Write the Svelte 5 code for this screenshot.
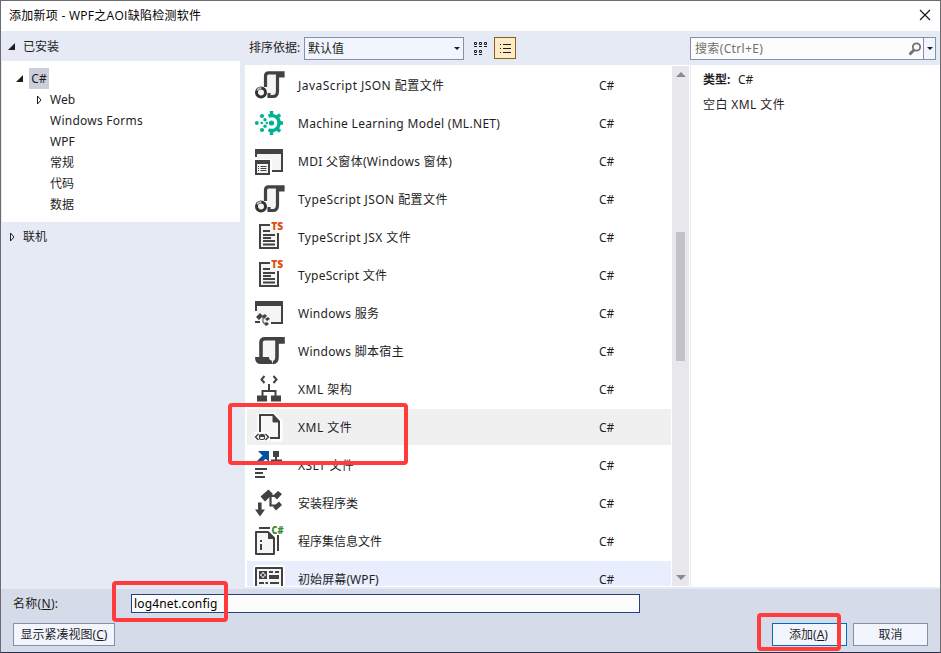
<script>
  const tree = [
    { label: 'Web' },
    { label: 'Windows Forms', track: 0.25 },
    { label: 'WPF' },
    { label: '常规' },
    { label: '代码' },
    { label: '数据' }
  ];
  const items = [
    { icon: 'json', name: 'JavaScript JSON 配置文件', track: 0.45 },
    { icon: 'ml', name: 'Machine Learning Model (ML.NET)', track: 0.3 },
    { icon: 'mdi', name: 'MDI 父窗体(Windows 窗体)', track: 0.3 },
    { icon: 'json', name: 'TypeScript JSON 配置文件', track: 0.42 },
    { icon: 'ts', name: 'TypeScript JSX 文件', track: 0.42 },
    { icon: 'ts', name: 'TypeScript 文件', track: 0.25 },
    { icon: 'service', name: 'Windows 服务', track: 0.3 },
    { icon: 'script', name: 'Windows 脚本宿主', track: 0.3 },
    { icon: 'schema', name: 'XML 架构', track: 0.5 },
    { icon: 'xml', name: 'XML 文件', track: 0.5, state: 'selected' },
    { icon: 'xslt', name: 'XSLT 文件', track: 0.4 },
    { icon: 'installer', name: '安装程序类' },
    { icon: 'info', name: '程序集信息文件' },
    { icon: 'splash', name: '初始屏幕(WPF)', track: 0.1, state: 'hover' }
  ];
</script>

{#snippet icon(kind)}
  <svg class="icon" width="32" height="32" viewBox="0 0 32 32">
    {#if kind === 'json'}
      <path d="M14 5h11v17l-3 6h-6l-2-6z" fill="#f5f5f5" />
      <path d="M12.500 18V7q0-3.200 3.200-3.200H30v3h-5.500V22q0 5.500-4.500 5.500h-4V24" fill="none" stroke="#424242" stroke-width="3.200" />
      <circle cx="8" cy="23.500" r="4.500" fill="#f4f4f4" stroke="#333" stroke-width="3" />
      <path d="M4.300 21.500q1-2.500 4-2.500" fill="none" stroke="#bbb" stroke-width="1.800" />
    {:else if kind === 'ml'}
      <g fill="#00b294">
        <circle cx="18.500" cy="16" r="2.600" />
        <circle cx="3.800" cy="16" r="1.900" /><circle cx="9" cy="9" r="2.100" /><circle cx="9" cy="23" r="2.100" />
        <circle cx="8.800" cy="16" r="1.300" /><circle cx="12" cy="12.800" r="1.700" /><circle cx="12" cy="19.200" r="1.700" />
        <circle cx="13.800" cy="16" r="1.200" />
      </g>
      <path d="M15.500 9.200a7.500 7.500 0 1 1 0 13.600" fill="none" stroke="#00b294" stroke-width="3.400" />
      <path d="M18.500 4v5M18.500 23v5M23.500 11l3.500-3.500M23.500 21l3.500 3.500M25 16h5" stroke="#00b294" stroke-width="3.500" />
    {:else if kind === 'mdi'}
      <path d="M2 4h28v23H19v-2h9V9H4v3H2z" fill="#424242" />
      <path d="M4 9h24v16h-9V14H4z" fill="#f5f5f5" />
      <path d="M3 16h13v13H3z" fill="#f5f5f5" stroke="#424242" stroke-width="2" /><path d="M2 15h15v4H2z" fill="#424242" />
      <path d="M5 21.500h1M7.500 21.500h6M5 23.500h1M7.500 23.500h6M5 25.500h1M7.500 25.500h6" stroke="#424242" />
    {:else if kind === 'ts'}
      <path d="M17 4H7v23h18V12" fill="#f5f5f5" stroke="#424242" stroke-width="2" />
      <path d="M10 10h7M10 14h12M10 17h8M10 20h12M10 23.500h12" stroke="#424242" stroke-width="2" />
      <text x="18.300" y="8.500" class="badge" fill="#e04e0f" textLength="12" lengthAdjust="spacingAndGlyphs">TS</text>
    {:else if kind === 'service'}
      <path d="M4 9h24v16H4z" fill="#f5f5f5" />
      <path d="M2 4h28v23H18v-2h10V9H4v5H2z" fill="#424242" />
      <path d="M3 20l4-4 3 3-4 4zM9 19l3-2 2 2-3 3zM12 22l3-2 2 2-3 2zM11 27l3-2 2 2-3 2zM2 24h5v2H2z" fill="#424242" />
      <path d="M10 20v6h3" fill="none" stroke="#424242" />
    {:else if kind === 'script'}
      <path d="M10 5h13v17l-3 6H10z" fill="#f5f5f5" />
      <path d="M8 22V7.500q0-3.700 4-3.700h18V7h-6v15q0 5.500-4 5.500" fill="none" stroke="#424242" stroke-width="3.600" />
      <path d="M2 22h14q0 3 2.500 3.500L20 29H7q-5 0-5-7z" fill="#424242" />
    {:else if kind === 'schema'}
      <path d="M11.500 3L8.500 6.500l3 3.500M20.500 3l3 3.500-3 3.500M16 11v7M9.500 23v-5h13v5" fill="none" stroke="#424242" stroke-width="2" />
      <path d="M4 22.500h10v6H4zM18 22.500h10v6H18z" fill="#424242" />
    {:else if kind === 'xml'}
      <path d="M7 22V4.500h14l6 6V28H18" fill="#f7f7f7" stroke="#fff" stroke-width="5" stroke-linejoin="round" />
      <path d="M7 21V4h13l6 6.500V27h-9" fill="#f7f7f7" stroke="#424242" stroke-width="2" />
      <path d="M20 4v7h7z" fill="#424242" stroke="#424242" />
      <rect x="1" y="21" width="16" height="9" rx="3" fill="#fff" />
      <path d="M5.500 23l-3 3 3 3M12.500 23l3 3-3 3" fill="none" stroke="#424242" stroke-width="1.500" />
      <rect x="6.500" y="23.500" width="5" height="5" rx="1.500" fill="#f5f5f5" stroke="#424242" stroke-width="1.200" /><path d="M7 24h4v2H7z" fill="#424242" />
    {:else if kind === 'xslt'}
      <path d="M5 2h11v11l-3.300-3.300L6 16l-3-3 6.500-6.500z" fill="#00539c" />
      <path d="M20 2h6v6h-6zM17 12h5v4h-5zM25 12h5v4h-5z" fill="#424242" />
      <path d="M23 7v5M18 11.500h11M2 20h12M2 24h8M2 28h10" stroke="#424242" stroke-width="2" />
    {:else if kind === 'installer'}
      <path d="M7.500 9.500l8-7 4.500 4.500-8 7.500zM20 8.500l5-4.500 4 3-5 5.500zM20 20l6-5.500 3 3.500-6 5.500z" fill="#424242" />
      <path d="M15 9h8M17.500 9v9.500H23" fill="none" stroke="#424242" stroke-width="2.200" />
      <path d="M5 15.500h3.600v7h3.400L7 29.500l-5-7h3z" fill="#424242" />
    {:else if kind === 'info'}
      <path d="M6 3h11M25 10v16" stroke="#424242" stroke-width="2" />
      <path d="M3 7h12l6 6v16H3z" fill="#f5f5f5" stroke="#424242" stroke-width="2" stroke-linejoin="round" />
      <path d="M15 7v7h7zM7 15h2v2H7zM7 19h2v6H7z" fill="#424242" />
      <text x="18.500" y="8.500" class="badge" fill="#388a34" textLength="12" lengthAdjust="spacingAndGlyphs">C#</text>
    {:else}
      <rect x="0" y="2" width="32" height="32" rx="3" fill="#fff" />
      <path d="M3 34V5h26v29" fill="#f5f5f5" stroke="#424242" stroke-width="2" stroke-linejoin="round" />
      <path d="M6 8h8v8H6z" fill="#424242" /><path d="M10 9l1 2 2 1-2 1-1 2-1-2-2-1 2-1z" fill="none" stroke="#eee" stroke-width=".9" />
      <path d="M16 9h4M22 9h4" stroke="#424242" stroke-width="2" />
      <path d="M16 12h10v4H16z" fill="#424242" /><path d="M6 20h5M12.500 20h2.500M17 20h9" stroke="#424242" stroke-width="2" />
    {/if}
  </svg>
{/snippet}

<div class="window">
  <header>
    <span class="title">添加新项 - WPF之AOI缺陷检测软件</span>
    <svg width="12" height="12" viewBox="0 0 12 12"><path d="M1 1l10 10M11 1L1 11" stroke="#111" stroke-width="1.100" /></svg>
  </header>

  <main>
    <aside>
      <div class="group installed">
        <svg width="8" height="8"><path d="M7 0v7H0z" fill="#1e1e1e" /></svg><span>已安装</span>
      </div>
      <div class="tree">
        <div class="node root"><svg width="8" height="8"><path d="M7 0v7H0z" fill="#1e1e1e" /></svg><span class="current">C#</span></div>
        {#each tree as node, i}
          <div class="node child">
            <span class="twist">{#if i === 0}<svg width="6" height="10"><path d="M1.500 1v8L5 5z" fill="none" stroke="#1e1e1e" /></svg>{/if}</span>
            <span style:letter-spacing="{node.track ?? 0}px">{node.label}</span>
          </div>
        {/each}
      </div>
      <div class="group online">
        <svg width="6" height="10"><path d="M1.500 1v8L5 5z" fill="none" stroke="#1e1e1e" /></svg><span>联机</span>
      </div>
    </aside>

    <section class="center">
      <div class="toolbar">
        <span class="sort">排序依据:</span>
        <div class="select"><span>默认值</span><i></i></div>
        <svg class="grid" width="14" height="13" viewBox="0 0 14 13">
          <path d="M.5.500h2v2h-2zM5.500.500h2v2h-2zM10.500.500h2v2h-2zM.5 8.500h2v2h-2zM5.500 8.500h2v2h-2z" fill="none" stroke="#1e1e1e" />
          <path d="M0 4.500h3M5 4.500h3M10 4.500h3M0 12.500h3M5 12.500h3" stroke="#1e1e1e" />
        </svg>
        <div class="listmode"><svg width="12" height="11"><path d="M1 1.500h1M4 1.500h8M1 5.500h1M4 5.500h8M1 9.500h1M4 9.500h8" stroke="#1e1e1e" /></svg></div>
      </div>
      <div class="listbox">
        <div class="rows">
          {#each items as item}
            <div class="row {item.state ?? ''}">
              {@render icon(item.icon)}
              <span class="name" style:letter-spacing="{item.track ?? 0}px">{item.name}</span>
              <span class="lang">C#</span>
            </div>
          {/each}
        </div>
        <div class="scrollbar">
          <span class="up"></span><span class="thumb"></span><span class="down"></span>
        </div>
      </div>
    </section>

    <section class="details">
      <div class="search">
        <span class="hint">搜索(Ctrl+E)</span>
        <svg width="14" height="14" viewBox="0 0 14 14"><circle cx="8.500" cy="5" r="3.700" fill="none" stroke="#717171" stroke-width="1.800" /><path d="M6 8L1.500 12.500" stroke="#717171" stroke-width="2.800" /></svg>
        <div class="drop"><i></i></div>
      </div>
      <div class="info">
        <p><b>类型:</b><span>C#</span></p>
        <p class="summary">空白 XML 文件</p>
      </div>
    </section>
  </main>

  <footer>
    <div class="line">
      <label for="filename">名称(<u>N</u>):</label>
      <div class="input" id="filename">log4net.config</div>
    </div>
    <div class="line buttons">
      <button class="compact">显示紧凑视图(<u>C</u>)</button>
      <button class="add">添加(<u>A</u>)</button>
      <button class="cancel">取消</button>
    </div>
  </footer>

  <div class="mark file"></div>
  <div class="mark filename"></div>
  <div class="mark confirm"></div>
</div>

<style>
  .window {
    position: relative;
    box-sizing: border-box;
    width: 941px;
    height: 653px;
    overflow: hidden;
    display: flex;
    flex-direction: column;
    border: 1px solid #6b6b70;
    border-bottom-color: #2b3049;
    background: #e6eaf5;
    color: #1e1e1e;
    font: 12px/18px "Noto Sans", "Noto Sans CJK SC", sans-serif;
    white-space: nowrap;
  }
  header {
    height: 30px;
    flex: none;
    display: flex;
    align-items: center;
    justify-content: space-between;
    padding: 0 9px 0 8px;
    box-sizing: border-box;
    background: #fff;
    color: #000;
  }
  .title { font-family: "Open Sans", "Noto Sans CJK SC", sans-serif; letter-spacing: 0.27px; }
  header svg { margin-top: -2px; }
  main { height: 558px; flex: none; display: flex; }
  aside { width: 244px; flex: none; }
  .group { height: 30px; display: flex; align-items: center; gap: 7px; padding-left: 7px; }
  .installed { box-sizing: border-box; padding-top: 2px; }
  .group svg { width: 8px; flex: none; }
  .online { padding-left: 8px; gap: 6px; }
  .tree { margin-left: 1px; width: 238px; height: 161px; box-sizing: border-box; padding-top: 7px; background: #fff; }
  .node { height: 21px; display: flex; align-items: center; }
  .root { padding-left: 14px; gap: 5px; }
  .current { background: #cccedb; height: 21px; line-height: 21px; width: 20px; text-align: center; }
  .child { padding-left: 34px; }
  .twist { width: 14px; height: 10px; display: flex; }
  .center { width: 445px; flex: none; }
  .toolbar { height: 34px; display: flex; align-items: center; padding-left: 4px; }
  .sort { width: 55px; }
  .select {
    width: 160px; height: 23px; box-sizing: border-box; border: 1px solid #8591a8;
    display: flex; align-items: center; justify-content: space-between; padding: 0 3px; background: #f2f5fd;
  }
  .select span { padding-top: 1px; }
  i { border: 3px solid transparent; border-top-color: #1e1e1e; border-bottom: 0; width: 0; height: 0; }
  .grid { margin-left: 10px; }
  .listmode {
    width: 22px; height: 22px; box-sizing: border-box; border: 1px solid #86631a; background: #fdebc6;
    margin-left: 6px; display: flex; align-items: center; justify-content: center;
  }
  .listbox { height: 522px; display: flex; background: #fff; justify-content: space-between; }
  .rows { width: 426px; padding: 2px 0 0 2px; box-sizing: border-box; overflow: hidden; height: 521px; display: flex; flex-direction: column; gap: 2px; }
  .row { height: 36px; flex: none; display: flex; align-items: center; padding-left: 6px; }
  .selected { background: #f0f0f0; }
  .hover { background: #e8eefe; }
  .icon { flex: none; overflow: visible; }
  .badge { font: 800 10px "Open Sans", sans-serif; }
  .name, .lang { padding-top: 2px; }
  .name { width: 301px; margin-left: 13px; flex: none; }
  .scrollbar {
    width: 17px; height: 520px; margin: 1px 1px 0 0; background: #e8e8ec; display: flex;
    flex-direction: column; align-items: center; box-sizing: border-box; padding: 6px 0 6px;
  }
  .up { border: 5px solid transparent; border-top: 0; border-bottom-color: #868999; }
  .down { border: 5px solid transparent; border-bottom: 0; border-top-color: #868999; margin-top: auto; }
  .thumb { width: 9px; height: 129px; background: #c2c3c9; margin-top: 155px; }
  .details { flex: 1; display: flex; flex-direction: column; }
  .search {
    width: 246px; height: 23px; margin: 6px 0 5px; flex: none; box-sizing: border-box;
    border: 1px solid #8591a8; background: #fcfcfc; color: #717171; display: flex; align-items: center; padding-left: 4px;
  }
  .hint { letter-spacing: 0.35px; padding-top: 1px; }
  .search svg { margin-left: auto; }
  .drop { width: 11px; height: 21px; border-left: 1px solid #8591a8; margin-left: 1px; background: #f2f5fd; display: flex; align-items: center; justify-content: center; }
  .info { margin-left: 1px; height: 522px; box-sizing: border-box; background: #fff; padding: 2px 0 0 12px; }
  p { margin: 0; height: 25px; display: flex; align-items: center; line-height: 18px; }
  .summary { letter-spacing: 0.4px; }
  p b { width: 35px; }
  footer { flex: 1; background: #d6dbe9; padding: 5px 12px 0; }
  .line { height: 19px; display: flex; align-items: center; }
  label { width: 117px; flex: none; letter-spacing: 0.3px; }
  .input { width: 509px; height: 19px; box-sizing: border-box; border: 1px solid #26407f; background: #fcfcfc; color: #000; padding-left: 2px; line-height: 18px; margin-left: 1px; letter-spacing: 0.15px; }
  .buttons { margin-top: 10px; height: 23px; }
  button {
    box-sizing: border-box; height: 23px; padding: 0; margin: 0; border: 1px solid #8591a8;
    background: #f2f5fd; color: #1e1e1e; font: inherit; line-height: 20px; width: 75px;
  }
  .compact { width: 102px; }
  .add { margin-left: auto; border-color: #006cbe; padding-right: 2px; }
  .cancel { margin-left: 6px; }
  .mark { position: absolute; box-sizing: border-box; border: 4px solid #ff3b3b; border-radius: 4px; }
  .file { left: 227px; top: 402px; width: 180px; height: 62px; }
  .filename { left: 111px; top: 580px; width: 116px; height: 41px; }
  .confirm { left: 756px; top: 612px; width: 84px; height: 38px; }
</style>
